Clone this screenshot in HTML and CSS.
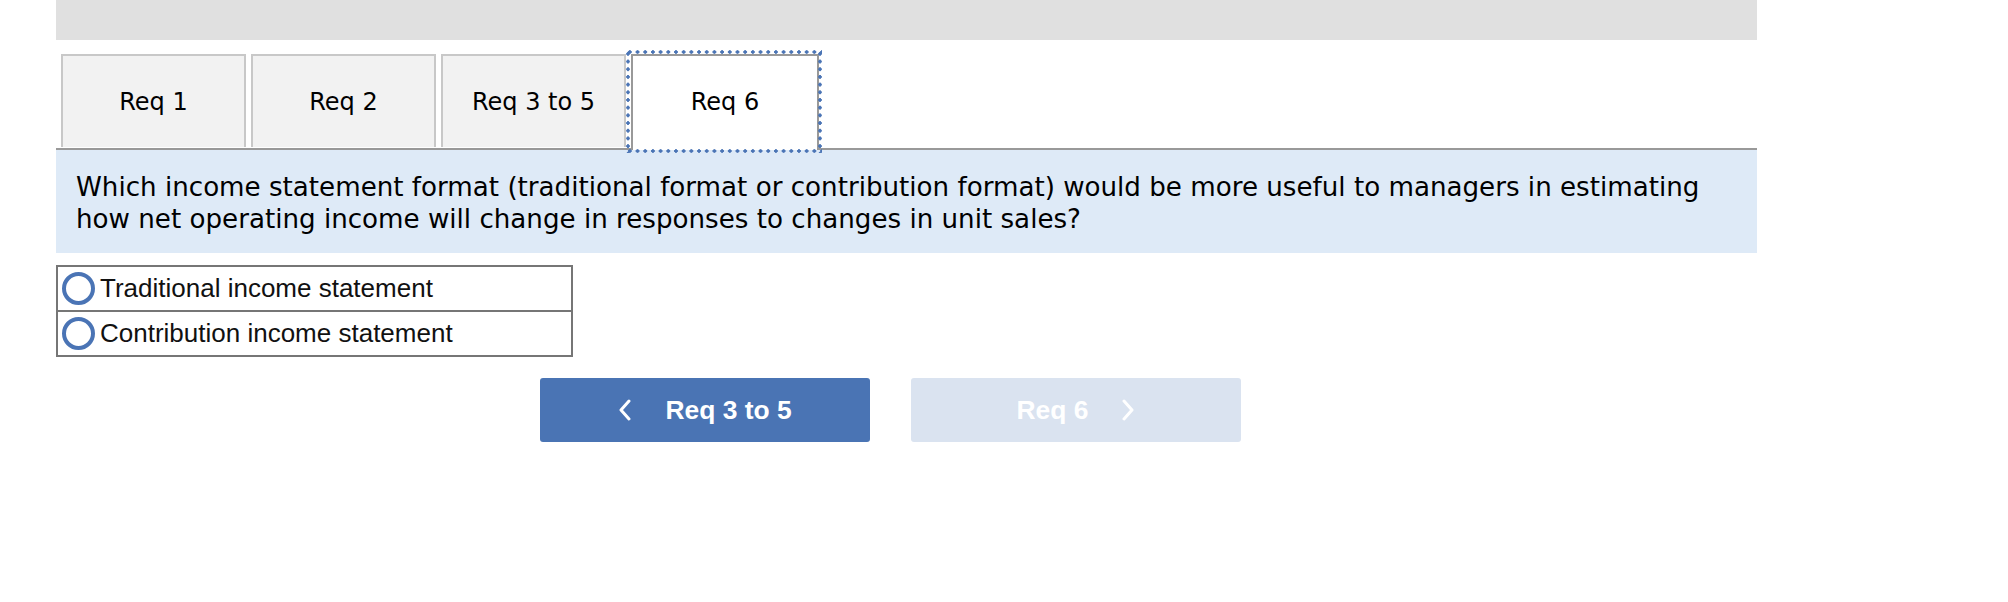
FILE: index.html
```html
<!DOCTYPE html>
<html lang="en">
<head>
  <meta charset="UTF-8" />
  <title>Req 6</title>
  <link rel="stylesheet" href="styles.css">
</head>
<body>
  <div class="page">
    <div class="top-bar"></div>

    <div class="tabs">
      <div class="tab">Req 1</div>
      <div class="tab">Req 2</div>
      <div class="tab">Req 3 to 5</div>
      <div class="tab active">Req 6</div>
    </div>

    <div class="question">
      Which income statement format (traditional format or contribution format) would be more useful to managers in estimating how net operating income will change in responses to changes in unit sales?
    </div>

    <div class="options">
      <label class="option"><span class="radio"></span>Traditional income statement</label>
      <label class="option"><span class="radio"></span>Contribution income statement</label>
    </div>

    <div class="nav">
      <button class="nav-btn prev">
        <svg width="14" height="22" viewBox="0 0 14 22"><polyline points="11,2 3,11 11,20" fill="none" stroke="#fff" stroke-width="3" stroke-linecap="round" stroke-linejoin="round"/></svg>
        <span>Req 3 to 5</span>
      </button>
      <button class="nav-btn next" disabled>
        <span>Req 6</span>
        <svg width="14" height="22" viewBox="0 0 14 22"><polyline points="3,2 11,11 3,20" fill="none" stroke="#fff" stroke-width="3" stroke-linecap="round" stroke-linejoin="round"/></svg>
      </button>
    </div>
  </div>
</body>
</html>
```

FILE: styles.css
```css
* {
  box-sizing: border-box;
  margin: 0;
  padding: 0;
}

body {
  background: #ffffff;
  font-family: "DejaVu Sans", Verdana, sans-serif;
  color: #000;
}

.page {
  margin-left: 56px;
  width: 1701px;
}

.top-bar {
  height: 40px;
  background: #e0e0e0;
}

/* Tabs */
.tabs {
  display: flex;
  gap: 5px;
  margin-top: 14px;
  padding-left: 5px;
  border-bottom: 2px solid #999;
}

.tab {
  width: 185px;
  height: 93px;
  display: flex;
  align-items: center;
  justify-content: center;
  background: #f2f2f2;
  border: 2px solid #c8c8c8;
  border-bottom: none;
  font-size: 24px;
}

.tab.active {
  position: relative;
  width: 188px;
  height: 96px;
  margin-bottom: -2px;
  background: #ffffff;
  border-color: #999;
  padding-bottom: 2px;
}

/* dotted focus ring, drawn as dots like the original */
.tab.active::after {
  content: "";
  position: absolute;
  top: -6px;
  left: -7px;
  right: -5px;
  bottom: -3px;
  background:
    radial-gradient(circle, #4a74b5 1.5px, transparent 2px) top left / 7.7px 4px repeat-x,
    radial-gradient(circle, #4a74b5 1.5px, transparent 2px) bottom left / 7.7px 4px repeat-x,
    radial-gradient(circle, #4a74b5 1.5px, transparent 2px) top left / 4px 7.7px repeat-y,
    radial-gradient(circle, #4a74b5 1.5px, transparent 2px) top right / 4px 7.7px repeat-y;
  pointer-events: none;
}

/* Question */
.question {
  background: #deeaf7;
  padding: 21px 20px 18px;
  font-size: 26.15px;
  line-height: 32px;
}

/* Options */
.options {
  width: 517px;
  margin-top: 12px;
  border: 2px solid #767676;
}

.option {
  display: flex;
  align-items: center;
  height: 43px;
  padding-left: 4px;
  font-family: "Liberation Sans", Arial, sans-serif;
  font-size: 26px;
  color: #111;
}

.option + .option {
  height: 45px;
  border-top: 2px solid #767676;
}

.radio {
  width: 33px;
  height: 33px;
  margin-right: 5px;
  border: 4px solid #4a74b5;
  border-radius: 50%;
  background: #fff;
}

/* Navigation buttons */
.nav {
  display: flex;
  gap: 41px;
  margin-top: 21px;
  margin-left: 484px;
}

.nav-btn {
  width: 330px;
  height: 64px;
  display: flex;
  align-items: center;
  justify-content: center;
  gap: 33px;
  border: none;
  border-radius: 3px;
  font-family: "Liberation Sans", Arial, sans-serif;
  font-weight: bold;
  font-size: 26.4px;
  color: #fff;
}

.nav-btn.prev {
  background: #4a74b4;
}

.nav-btn.next {
  background: #dae3f0;
}
```
